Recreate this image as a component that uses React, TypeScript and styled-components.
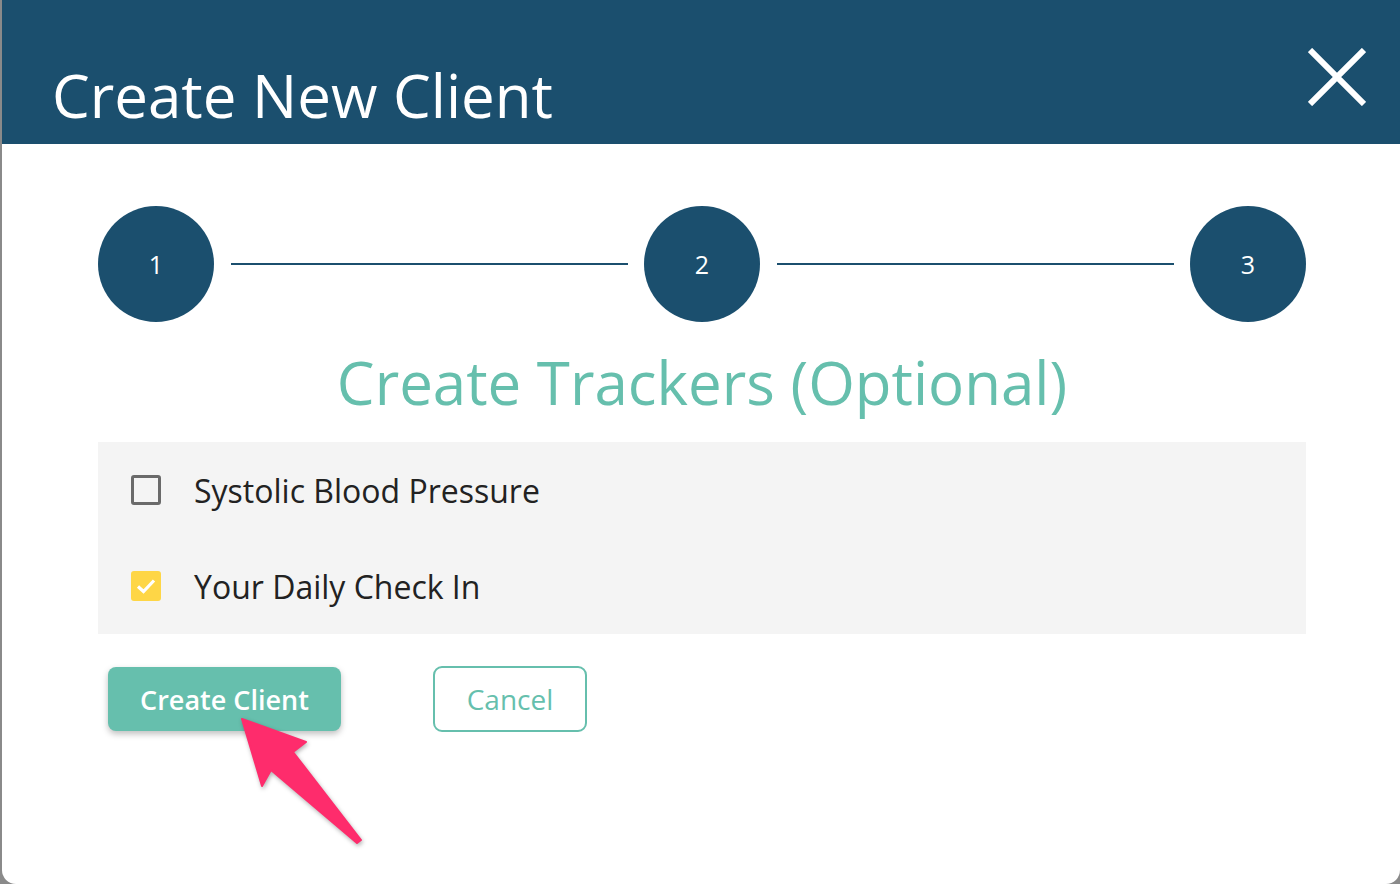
import React, { useState } from 'react';
import styled, { createGlobalStyle } from 'styled-components';

const navy = '#1b4f6e';
const teal = '#66bfad';

const GlobalStyle = createGlobalStyle`
  html, body {
    margin: 0;
    padding: 0;
    background: #8a8a8a;
    font-family: 'Open Sans', 'Noto Sans', sans-serif;
  }
  * { box-sizing: border-box; }
`;

const Page = styled.div`
  height: 884px;
  overflow: hidden;
  padding-left: 2px;
`;

const Modal = styled.div`
  position: relative;
  width: 1398px;
  height: 884px;
  background: #fff;
  border-radius: 0 0 14px 14px;
  overflow: hidden;
`;

const Header = styled.div`
  height: 144px;
  background: ${navy};
  display: flex;
  justify-content: space-between;
  align-items: flex-start;
  padding: 57px 34px 0 50px;
`;

const Title = styled.h1`
  margin: 0;
  font-size: 60px;
  line-height: 76px;
  font-weight: 400;
  color: #fff;
`;

const CloseButton = styled.button`
  margin-top: -9px;
  width: 58px;
  height: 58px;
  padding: 0;
  border: none;
  background: transparent;
  cursor: pointer;
`;

const Body = styled.div`
  padding: 62px 94px 0 96px;
`;

const Stepper = styled.div`
  display: flex;
  align-items: center;
`;

const Step = styled.div`
  width: 116px;
  height: 116px;
  border-radius: 50%;
  background: ${navy};
  color: #fff;
  font-size: 25px;
  display: flex;
  align-items: center;
  justify-content: center;
  flex-shrink: 0;
`;

const StepLine = styled.div`
  flex: 1;
  height: 2px;
  margin: 0 16px 0 17px;
  background: ${navy};
`;

const Heading = styled.h2`
  margin: 22px 0 22px;
  text-align: center;
  font-size: 60px;
  line-height: 76px;
  font-weight: 400;
  color: ${teal};
`;

const TrackerPanel = styled.div`
  background: #f4f4f4;
  padding: 0 33px;
`;

const TrackerRow = styled.label`
  height: 96px;
  display: flex;
  align-items: center;
  gap: 33px;
  font-size: 32px;
  color: #222;
  cursor: pointer;
`;

const Box = styled.span<{ $checked: boolean }>`
  width: 30px;
  height: 30px;
  border-radius: 3px;
  display: flex;
  align-items: center;
  justify-content: center;
  background: ${({ $checked }) => ($checked ? '#fed646' : 'transparent')};
  border: ${({ $checked }) => ($checked ? 'none' : '3px solid #6a6a6a')};
`;

const Actions = styled.div`
  display: flex;
  align-items: center;
  gap: 92px;
  margin-top: 32px;
  padding-left: 10px;
`;

const PrimaryButton = styled.button`
  width: 233px;
  height: 64px;
  border: none;
  border-radius: 8px;
  background: ${teal};
  color: #fff;
  font-family: inherit;
  font-size: 27px;
  font-weight: 600;
  box-shadow: 0 3px 6px rgba(0, 0, 0, 0.25);
  cursor: pointer;
`;

const OutlineButton = styled.button`
  width: 154px;
  height: 66px;
  border: 2px solid ${teal};
  border-radius: 9px;
  background: #fff;
  color: ${teal};
  font-family: inherit;
  font-size: 28px;
  font-weight: 500;
  cursor: pointer;
`;

const Pointer = styled.svg`
  position: absolute;
  left: 228px;
  top: 706px;
  filter: drop-shadow(1px 2px 2px rgba(0, 0, 0, 0.3));
  pointer-events: none;
`;

const trackers = ['Systolic Blood Pressure', 'Your Daily Check In'];

export default function App() {
  const [checked, setChecked] = useState<boolean[]>([false, true]);

  const toggle = (i: number) =>
    setChecked((prev) => prev.map((v, j) => (j === i ? !v : v)));

  return (
    <Page>
      <GlobalStyle />
      <Modal>
        <Header>
          <Title>Create New Client</Title>
          <CloseButton aria-label="Close">
            <svg width="58" height="58" viewBox="0 0 58 58">
              <path d="M2 2 L56 56 M56 2 L2 56" stroke="#fff" strokeWidth="6" />
            </svg>
          </CloseButton>
        </Header>
        <Body>
          <Stepper>
            <Step>1</Step>
            <StepLine />
            <Step>2</Step>
            <StepLine />
            <Step>3</Step>
          </Stepper>
          <Heading>Create Trackers (Optional)</Heading>
          <TrackerPanel>
            {trackers.map((t, i) => (
              <TrackerRow key={t} onClick={() => toggle(i)}>
                <Box $checked={checked[i]}>
                  {checked[i] && (
                    <svg width="22" height="18" viewBox="0 0 22 18">
                      <path d="M3 9.5 L8.5 14.5 L19 3.5" fill="none" stroke="#fff" strokeWidth="3.2" />
                    </svg>
                  )}
                </Box>
                {t}
              </TrackerRow>
            ))}
          </TrackerPanel>
          <Actions>
            <PrimaryButton>Create Client</PrimaryButton>
            <OutlineButton>Cancel</OutlineButton>
          </Actions>
        </Body>
        <Pointer width="140" height="145" viewBox="0 0 140 145">
          <polygon
            points="12,13 76,36 63,46 131,134 127,137 41,64 32,80"
            fill="#fe2c6c"
            strokeLinejoin="round"
            stroke="#fe2c6c"
            strokeWidth="2"
          />
        </Pointer>
      </Modal>
    </Page>
  );
}
